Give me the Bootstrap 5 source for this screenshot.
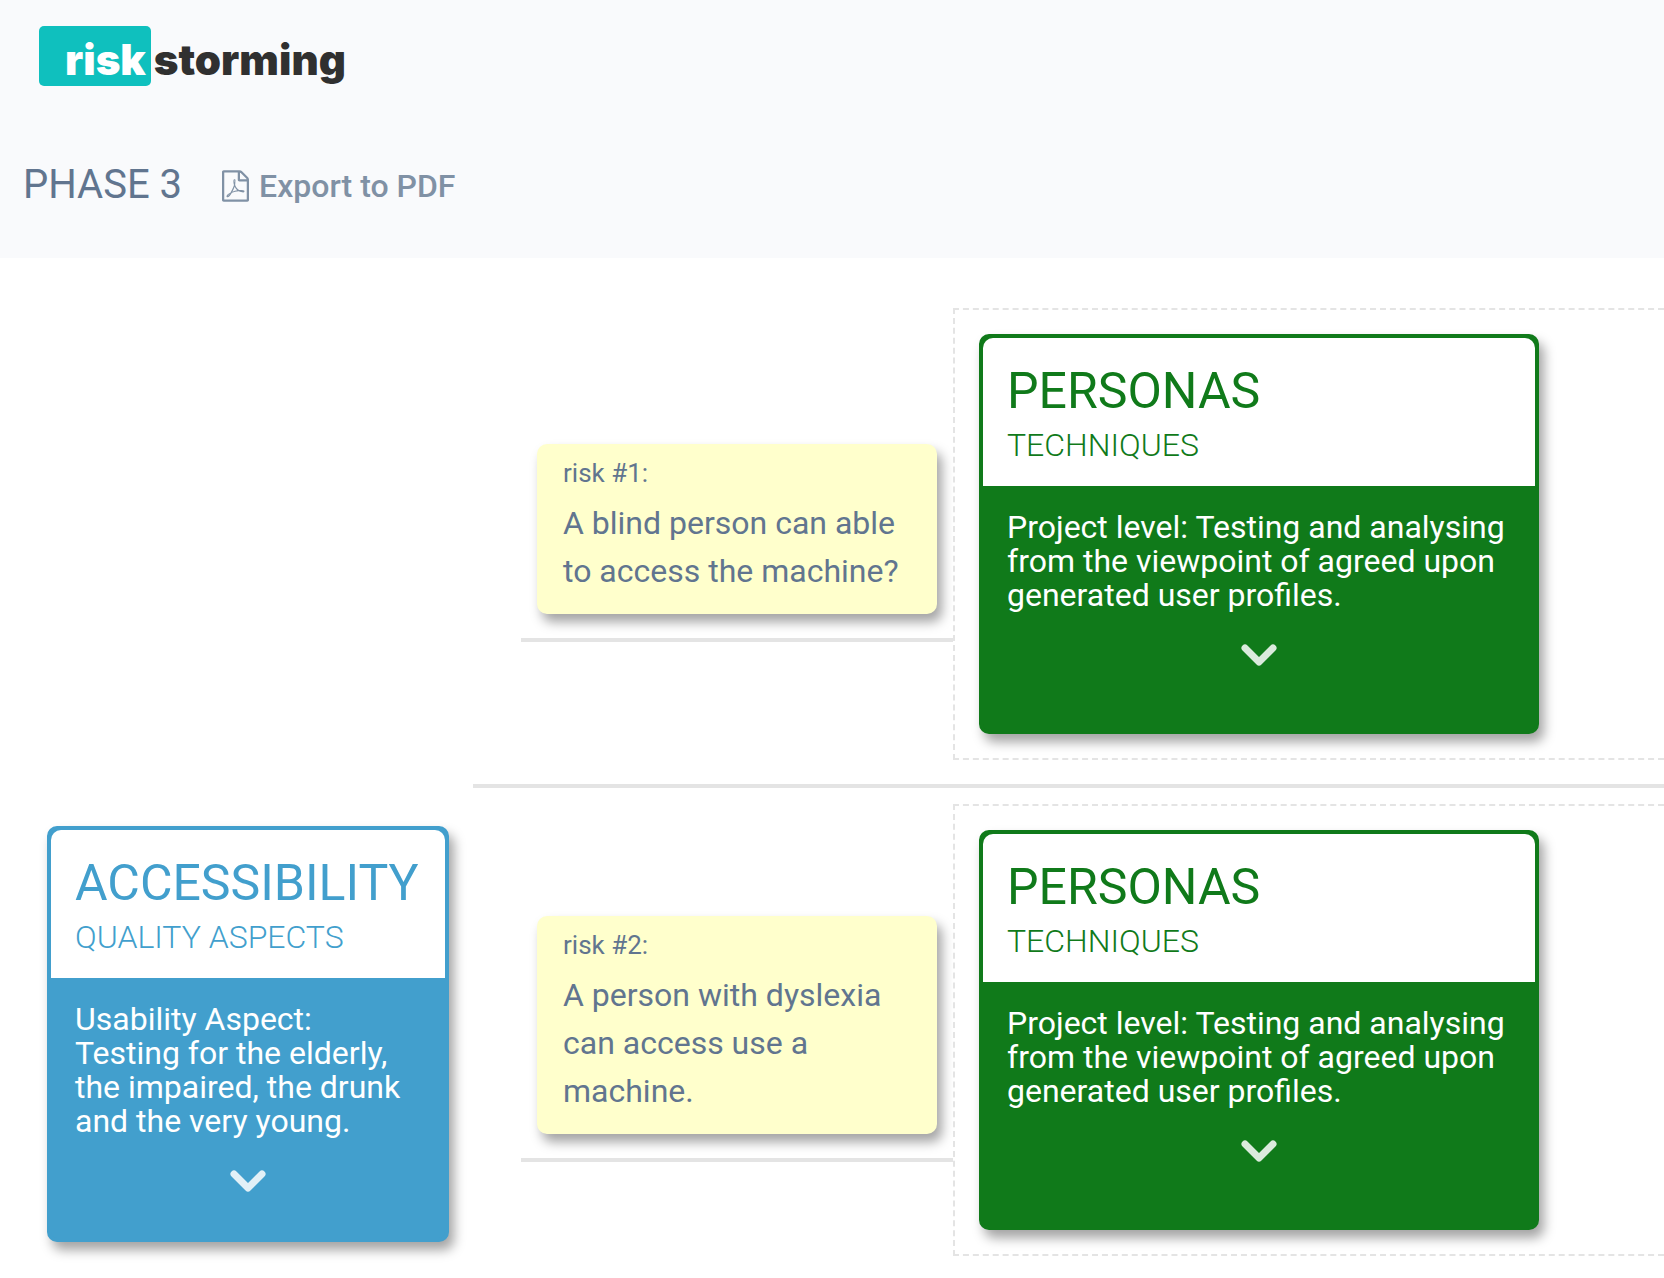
<!DOCTYPE html>
<html lang="en">
<head>
<meta charset="utf-8">
<meta name="viewport" content="width=device-width, initial-scale=1">
<title>RiskStorming - Phase 3</title>
<link rel="stylesheet" href="https://cdn.jsdelivr.net/npm/bootstrap@5.3.0/dist/css/bootstrap.min.css">
<style>
  body { font-family: Roboto, "Liberation Sans", sans-serif; font-size: 32px; color: #61758f; background: #fff; }
  .top-area { background: #f9fafc; padding: 26px 23px 40px; }
  .brand-logo { margin: 0 0 68px 16px; height: 60px; font-family: Inter, sans-serif; font-size: 42px; line-height: 60px; font-weight: 900; color: #303030; }
  .brand-box { background: #0fc0be; color: #fff; border-radius: 5px; padding: 4px 5px 0 26px; height: 60px; }
  .brand-rest { padding: 4px 0 0 3px; }
  .phase-bar { gap: 40px; }
  .phase-title { font-size: 40px; line-height: 62px; }
  .export-link { color: #8091a5; line-height: 64px; gap: 10px; }
  .board { padding: 50px 0 22px 47px; }
  .aspect-col { width: 402px; margin: 0 24px 14px 0; }
  .play-card, .risk-note { border-radius: 10px; box-shadow: 5px 8px 12px rgba(0,0,0,.36); }
  .play-card { border: 4px solid var(--tone); background: var(--tone); }
  .tone-blue { --tone: #429fcd; }
  .tone-green { --tone: #107a1a; width: 560px; min-height: 400px; }
  .play-head { background: #fff; color: var(--tone); border-radius: 10px 10px 0 0; padding: 24px 24px 16px; }
  .play-title { font-size: 50px; line-height: 58px; }
  .play-kind { line-height: 50px; font-weight: 300; }
  .play-text { color: #fff; line-height: 34px; padding: 24px 24px 32px; }
  .more-btn { line-height: 0; padding: 0 12px; margin-bottom: 46px; opacity: .85; color: #fff; }
  .risk-row { padding-left: 48px; }
  .risk-row + .risk-row { border-top: 4px solid #e4e4e4; margin-top: 24px; padding-top: 16px; }
  .risk-cell { width: 432px; padding: 18px 16px 24px; border-bottom: 4px solid #e4e4e4; }
  .risk-note { background: #ffc; padding: 10px 26px 19px; }
  .risk-label { font-size: 26px; line-height: 38px; margin-bottom: 7px; }
  .risk-text { line-height: 48px; }
  .drop-zone { border: 2px dashed #e4e4e4; padding: 24px; }
</style>
<script src="https://cdn.jsdelivr.net/npm/bootstrap@5.3.0/dist/js/bootstrap.bundle.min.js"></script>
</head>
<body>
<header class="top-area">
  <a href="#" class="brand-logo d-flex text-decoration-none"><span class="brand-box">risk</span><span class="brand-rest">storming</span></a>
  <div class="phase-bar d-flex align-items-start">
    <h1 class="phase-title fw-normal mb-0">PHASE 3</h1>
    <a href="#" class="export-link d-flex align-items-center text-decoration-none fw-medium">
      <svg width="27" height="32" viewBox="0 0 1536 1792" fill="currentColor" aria-hidden="true"><path d="M1468 380q28 28 48 76t20 88v1152q0 40-28 68t-68 28h-1344q-40 0-68-28t-28-68v-1600q0-40 28-68t68-28h896q40 0 88 20t76 48zM1024 136v376h376q-10-29-22-41l-313-313q-12-12-41-22zM1408 1664v-1024h-416q-40 0-68-28t-28-68v-416h-768v1536h1280zm-514-593q33 26 84 56 59-7 117-7 147 0 177 49 16 22 2 52 0 1-1 2l-2 2v1q-6 38-71 38-48 0-115-20t-130-53q-221 24-392 83-153 262-242 262-15 0-28-7l-24-12q-1-1-6-5-10-10-6-36 9-40 56-91.5t132-96.5q14-9 23 6 2 2 2 4 52-85 107-197 68-136 104-262-24-82-30.5-159.5t6.5-127.5q11-40 42-40h22q23 0 35 15 18 21 9 68-2 6-4 8 1 3 1 8v30q-2 123-14 192 55 164 146 238zm-576 411q52-24 137-158-51 40-87.5 84t-49.5 74zm398-920q-15 42-2 132 1-7 7-44 0-3 7-43 1-4 4-8-1-1-1-2t-1-2-1-3q-1-22-13-36 0 1-1 2v2zm-124 661q135-54 284-81-2-1-13-9.5t-16-13.5q-76-67-127-176-27 86-83 197-30 56-45 83zm646-16q-24-24-140-24 76 28 124 28 14 0 18-1 0-1-2-3z"/></svg>
      <span>Export to PDF</span></a>
  </div>
</header>
<main class="board d-flex">
  <section class="aspect-col flex-shrink-0 align-self-end">
    <article class="play-card tone-blue">
      <div class="play-head">
        <h2 class="play-title fw-normal mb-0">ACCESSIBILITY</h2>
        <div class="play-kind">QUALITY ASPECTS</div>
      </div>
      <p class="play-text mb-0">Usability Aspect: Testing for the elderly, the impaired, the drunk and the very young.</p>
      <button type="button" class="more-btn btn border-0 d-block mx-auto" aria-label="Show more"><svg width="36" height="22" viewBox="0 0 36 22" fill="none" stroke="currentColor" stroke-width="7" stroke-linecap="round" stroke-linejoin="round"><path d="M4 4l14 14L32 4"/></svg></button>
    </article>
  </section>
  <div class="flex-grow-1">
    <section class="risk-row d-flex align-items-center">
      <div class="risk-cell flex-shrink-0">
        <div class="risk-note">
          <div class="risk-label">risk #1:</div>
          <div class="risk-text">A blind person can able to access the machine?</div>
        </div>
      </div>
      <div class="drop-zone border-end-0 flex-grow-1">
        <article class="play-card tone-green">
          <div class="play-head">
            <h2 class="play-title fw-normal mb-0">PERSONAS</h2>
            <div class="play-kind">TECHNIQUES</div>
          </div>
          <p class="play-text mb-0">Project level: Testing and analysing from the viewpoint of agreed upon generated user profiles.</p>
          <button type="button" class="more-btn btn border-0 d-block mx-auto" aria-label="Show more"><svg width="36" height="22" viewBox="0 0 36 22" fill="none" stroke="currentColor" stroke-width="7" stroke-linecap="round" stroke-linejoin="round"><path d="M4 4l14 14L32 4"/></svg></button>
        </article>
      </div>
    </section>
    <section class="risk-row d-flex align-items-center">
      <div class="risk-cell flex-shrink-0">
        <div class="risk-note">
          <div class="risk-label">risk #2:</div>
          <div class="risk-text">A person with dyslexia can access use a machine.</div>
        </div>
      </div>
      <div class="drop-zone border-end-0 flex-grow-1">
        <article class="play-card tone-green">
          <div class="play-head">
            <h2 class="play-title fw-normal mb-0">PERSONAS</h2>
            <div class="play-kind">TECHNIQUES</div>
          </div>
          <p class="play-text mb-0">Project level: Testing and analysing from the viewpoint of agreed upon generated user profiles.</p>
          <button type="button" class="more-btn btn border-0 d-block mx-auto" aria-label="Show more"><svg width="36" height="22" viewBox="0 0 36 22" fill="none" stroke="currentColor" stroke-width="7" stroke-linecap="round" stroke-linejoin="round"><path d="M4 4l14 14L32 4"/></svg></button>
        </article>
      </div>
    </section>
  </div>
</main>
</body>
</html>
